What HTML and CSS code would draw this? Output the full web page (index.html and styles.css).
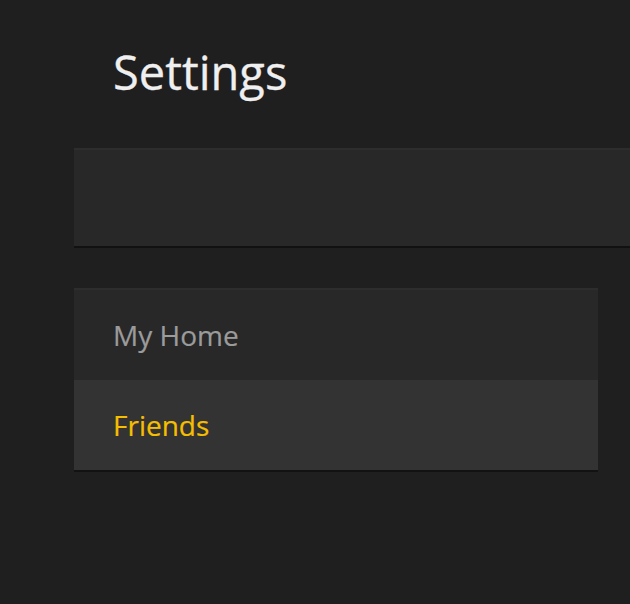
FILE: index.html
```html
<!DOCTYPE html>
<html>
<head>
<meta charset="utf-8">
<link rel="stylesheet" href="styles.css">
</head>
<body>
<div class="page">
  <h1 class="title">Settings</h1>
  <div class="panel-wide"></div>
  <ul class="menu">
    <li class="menu-item">My Home</li>
    <li class="menu-item active">Friends</li>
  </ul>
</div>
</body>
</html>
```
FILE: styles.css
```css
html, body {
  margin: 0;
  padding: 0;
  background: #1f1f1f;
  height: 100%;
  overflow: hidden;
}
.page {
  padding-left: 74px;
  font-family: "Open Sans", sans-serif;
}
.title {
  margin: 0;
  padding: 40px 0 0 39px;
  height: 148px;
  box-sizing: border-box;
  font-size: 47px;
  font-weight: 400;
  line-height: 64px;
  color: #efefef;
  -webkit-text-stroke: 0.3px #efefef;
}
.panel-wide {
  background: #282828;
  border-top: 2px solid #2d2d2d;
  border-bottom: 2px solid #111;
  box-sizing: border-box;
  height: 100px;
  margin-bottom: 40px;
}
.menu {
  list-style: none;
  margin: 0;
  padding: 0;
  width: 524px;
  border-bottom: 2px solid #121212;
}
.menu-item {
  height: 92px;
  box-sizing: border-box;
  padding-left: 39px;
  font-size: 28px;
  line-height: 90px;
  color: #9b9b9b;
  background: #282828;
  border-top: 2px solid #2d2d2d;
  -webkit-text-stroke: 0.2px currentColor;
}
.menu-item.active {
  height: 90px;
  border-top: 0;
  line-height: 90px;
  background: #333333;
  color: #f6be00;
}
```
